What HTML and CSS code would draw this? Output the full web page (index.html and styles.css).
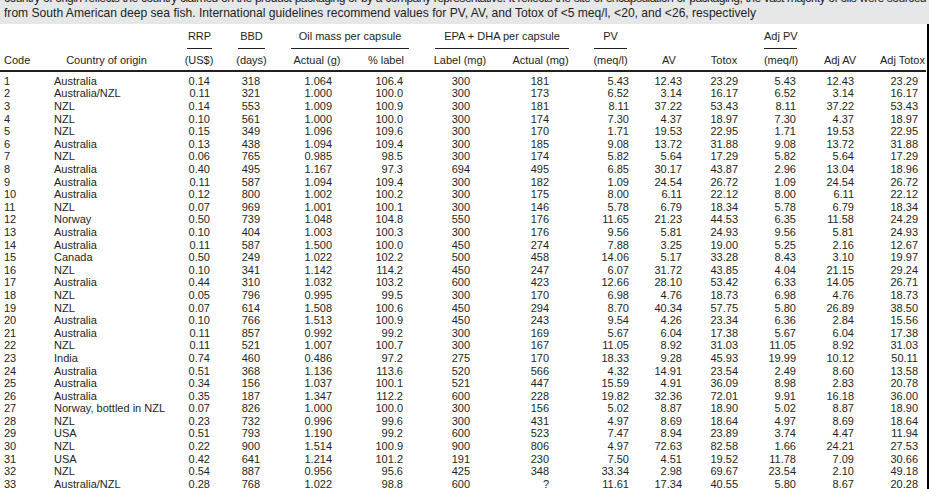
FILE: index.html
```html
<!DOCTYPE html>
<html lang="en">
<head>
<meta charset="utf-8">
<title>Fish oil supplements table</title>
<link rel="stylesheet" href="styles.css">
</head>
<body>
<div class="page">
  <div class="caption">
    <p class="cap-first">country of origin reflects the country claimed on the product packaging or by a company representative. It reflects the site of encapsulation or packaging; the vast majority of oils were sourced</p>
    <p>from South American deep sea fish. International guidelines recommend values for PV, AV, and Totox of &lt;5 meq/l, &lt;20, and &lt;26, respectively</p>
  </div>
  <div class="sheet">
    <div class="table">
      <div class="row head-top">
        <div class="span2"></div>
        <div class="rule rule-rrp">RRP</div>
        <div class="rule rule-bbd">BBD</div>
        <div class="span2 rule rule-oil">Oil mass per capsule</div>
        <div class="span2 rule rule-epa">EPA + DHA per capsule</div>
        <div class="rule rule-pv">PV</div>
        <div></div>
        <div></div>
        <div class="rule rule-adjpv">Adj PV</div>
        <div></div>
        <div></div>
      </div>
      <div class="row head-units">
        <div>Code</div>
        <div>Country of origin</div>
        <div>(US$)</div>
        <div>(days)</div>
        <div>Actual (g)</div>
        <div>% label</div>
        <div>Label (mg)</div>
        <div>Actual (mg)</div>
        <div>(meq/l)</div>
        <div>AV</div>
        <div>Totox</div>
        <div>(meq/l)</div>
        <div>Adj AV</div>
        <div>Adj Totox</div>
      </div>
      <div class="body">
        <div class="row"><span>1</span><span>Australia</span><span>0.14</span><span>318</span><span>1.064</span><span>106.4</span><span>300</span><span>181</span><span>5.43</span><span>12.43</span><span>23.29</span><span>5.43</span><span>12.43</span><span>23.29</span></div>
        <div class="row"><span>2</span><span>Australia/NZL</span><span>0.11</span><span>321</span><span>1.000</span><span>100.0</span><span>300</span><span>173</span><span>6.52</span><span>3.14</span><span>16.17</span><span>6.52</span><span>3.14</span><span>16.17</span></div>
        <div class="row"><span>3</span><span>NZL</span><span>0.14</span><span>553</span><span>1.009</span><span>100.9</span><span>300</span><span>181</span><span>8.11</span><span>37.22</span><span>53.43</span><span>8.11</span><span>37.22</span><span>53.43</span></div>
        <div class="row"><span>4</span><span>NZL</span><span>0.10</span><span>561</span><span>1.000</span><span>100.0</span><span>300</span><span>174</span><span>7.30</span><span>4.37</span><span>18.97</span><span>7.30</span><span>4.37</span><span>18.97</span></div>
        <div class="row"><span>5</span><span>NZL</span><span>0.15</span><span>349</span><span>1.096</span><span>109.6</span><span>300</span><span>170</span><span>1.71</span><span>19.53</span><span>22.95</span><span>1.71</span><span>19.53</span><span>22.95</span></div>
        <div class="row"><span>6</span><span>Australia</span><span>0.13</span><span>438</span><span>1.094</span><span>109.4</span><span>300</span><span>185</span><span>9.08</span><span>13.72</span><span>31.88</span><span>9.08</span><span>13.72</span><span>31.88</span></div>
        <div class="row"><span>7</span><span>NZL</span><span>0.06</span><span>765</span><span>0.985</span><span>98.5</span><span>300</span><span>174</span><span>5.82</span><span>5.64</span><span>17.29</span><span>5.82</span><span>5.64</span><span>17.29</span></div>
        <div class="row"><span>8</span><span>Australia</span><span>0.40</span><span>495</span><span>1.167</span><span>97.3</span><span>694</span><span>495</span><span>6.85</span><span>30.17</span><span>43.87</span><span>2.96</span><span>13.04</span><span>18.96</span></div>
        <div class="row"><span>9</span><span>Australia</span><span>0.11</span><span>587</span><span>1.094</span><span>109.4</span><span>300</span><span>182</span><span>1.09</span><span>24.54</span><span>26.72</span><span>1.09</span><span>24.54</span><span>26.72</span></div>
        <div class="row"><span>10</span><span>Australia</span><span>0.12</span><span>800</span><span>1.002</span><span>100.2</span><span>300</span><span>175</span><span>8.00</span><span>6.11</span><span>22.12</span><span>8.00</span><span>6.11</span><span>22.12</span></div>
        <div class="row"><span>11</span><span>NZL</span><span>0.07</span><span>969</span><span>1.001</span><span>100.1</span><span>300</span><span>146</span><span>5.78</span><span>6.79</span><span>18.34</span><span>5.78</span><span>6.79</span><span>18.34</span></div>
        <div class="row"><span>12</span><span>Norway</span><span>0.50</span><span>739</span><span>1.048</span><span>104.8</span><span>550</span><span>176</span><span>11.65</span><span>21.23</span><span>44.53</span><span>6.35</span><span>11.58</span><span>24.29</span></div>
        <div class="row"><span>13</span><span>Australia</span><span>0.10</span><span>404</span><span>1.003</span><span>100.3</span><span>300</span><span>176</span><span>9.56</span><span>5.81</span><span>24.93</span><span>9.56</span><span>5.81</span><span>24.93</span></div>
        <div class="row"><span>14</span><span>Australia</span><span>0.11</span><span>587</span><span>1.500</span><span>100.0</span><span>450</span><span>274</span><span>7.88</span><span>3.25</span><span>19.00</span><span>5.25</span><span>2.16</span><span>12.67</span></div>
        <div class="row"><span>15</span><span>Canada</span><span>0.50</span><span>249</span><span>1.022</span><span>102.2</span><span>500</span><span>458</span><span>14.06</span><span>5.17</span><span>33.28</span><span>8.43</span><span>3.10</span><span>19.97</span></div>
        <div class="row"><span>16</span><span>NZL</span><span>0.10</span><span>341</span><span>1.142</span><span>114.2</span><span>450</span><span>247</span><span>6.07</span><span>31.72</span><span>43.85</span><span>4.04</span><span>21.15</span><span>29.24</span></div>
        <div class="row"><span>17</span><span>Australia</span><span>0.44</span><span>310</span><span>1.032</span><span>103.2</span><span>600</span><span>423</span><span>12.66</span><span>28.10</span><span>53.42</span><span>6.33</span><span>14.05</span><span>26.71</span></div>
        <div class="row"><span>18</span><span>NZL</span><span>0.05</span><span>796</span><span>0.995</span><span>99.5</span><span>300</span><span>170</span><span>6.98</span><span>4.76</span><span>18.73</span><span>6.98</span><span>4.76</span><span>18.73</span></div>
        <div class="row"><span>19</span><span>NZL</span><span>0.07</span><span>614</span><span>1.508</span><span>100.6</span><span>450</span><span>294</span><span>8.70</span><span>40.34</span><span>57.75</span><span>5.80</span><span>26.89</span><span>38.50</span></div>
        <div class="row"><span>20</span><span>Australia</span><span>0.10</span><span>766</span><span>1.513</span><span>100.9</span><span>450</span><span>243</span><span>9.54</span><span>4.26</span><span>23.34</span><span>6.36</span><span>2.84</span><span>15.56</span></div>
        <div class="row"><span>21</span><span>Australia</span><span>0.11</span><span>857</span><span>0.992</span><span>99.2</span><span>300</span><span>169</span><span>5.67</span><span>6.04</span><span>17.38</span><span>5.67</span><span>6.04</span><span>17.38</span></div>
        <div class="row"><span>22</span><span>NZL</span><span>0.11</span><span>521</span><span>1.007</span><span>100.7</span><span>300</span><span>167</span><span>11.05</span><span>8.92</span><span>31.03</span><span>11.05</span><span>8.92</span><span>31.03</span></div>
        <div class="row"><span>23</span><span>India</span><span>0.74</span><span>460</span><span>0.486</span><span>97.2</span><span>275</span><span>170</span><span>18.33</span><span>9.28</span><span>45.93</span><span>19.99</span><span>10.12</span><span>50.11</span></div>
        <div class="row"><span>24</span><span>Australia</span><span>0.51</span><span>368</span><span>1.136</span><span>113.6</span><span>520</span><span>566</span><span>4.32</span><span>14.91</span><span>23.54</span><span>2.49</span><span>8.60</span><span>13.58</span></div>
        <div class="row"><span>25</span><span>Australia</span><span>0.34</span><span>156</span><span>1.037</span><span>100.1</span><span>521</span><span>447</span><span>15.59</span><span>4.91</span><span>36.09</span><span>8.98</span><span>2.83</span><span>20.78</span></div>
        <div class="row"><span>26</span><span>Australia</span><span>0.35</span><span>187</span><span>1.347</span><span>112.2</span><span>600</span><span>228</span><span>19.82</span><span>32.36</span><span>72.01</span><span>9.91</span><span>16.18</span><span>36.00</span></div>
        <div class="row"><span>27</span><span>Norway, bottled in NZL</span><span>0.07</span><span>826</span><span>1.000</span><span>100.0</span><span>300</span><span>156</span><span>5.02</span><span>8.87</span><span>18.90</span><span>5.02</span><span>8.87</span><span>18.90</span></div>
        <div class="row"><span>28</span><span>NZL</span><span>0.23</span><span>732</span><span>0.996</span><span>99.6</span><span>300</span><span>431</span><span>4.97</span><span>8.69</span><span>18.64</span><span>4.97</span><span>8.69</span><span>18.64</span></div>
        <div class="row"><span>29</span><span>USA</span><span>0.51</span><span>793</span><span>1.190</span><span>99.2</span><span>600</span><span>523</span><span>7.47</span><span>8.94</span><span>23.89</span><span>3.74</span><span>4.47</span><span>11.94</span></div>
        <div class="row"><span>30</span><span>NZL</span><span>0.22</span><span>900</span><span>1.514</span><span>100.9</span><span>900</span><span>806</span><span>4.97</span><span>72.63</span><span>82.58</span><span>1.66</span><span>24.21</span><span>27.53</span></div>
        <div class="row"><span>31</span><span>USA</span><span>0.42</span><span>641</span><span>1.214</span><span>101.2</span><span>191</span><span>230</span><span>7.50</span><span>4.51</span><span>19.52</span><span>11.78</span><span>7.09</span><span>30.66</span></div>
        <div class="row"><span>32</span><span>NZL</span><span>0.54</span><span>887</span><span>0.956</span><span>95.6</span><span>425</span><span>348</span><span>33.34</span><span>2.98</span><span>69.67</span><span>23.54</span><span>2.10</span><span>49.18</span></div>
        <div class="row"><span>33</span><span>Australia/NZL</span><span>0.28</span><span>768</span><span>1.022</span><span>98.8</span><span>600</span><span>?</span><span>11.61</span><span>17.34</span><span>40.55</span><span>5.80</span><span>8.67</span><span>20.28</span></div>
      </div>
    </div>
  </div>
</div>
</body>
</html>
```
FILE: styles.css
```css
* { box-sizing: border-box; }

html, body {
  margin: 0;
  padding: 0;
  background: #fff;
}

body {
  font-family: "Liberation Sans", Arial, sans-serif;
  color: #231f20;
  overflow: hidden;
}

.page {
  width: 929px;
}

/* caption band (scrolled so its first line is cut off) */
.caption {
  margin-top: -9px;
  height: 33px;
  padding: 0 3px 0 4px;
  background: #e6e7e9;
  font-size: 12.1px;
  line-height: 15px;
}

.caption p {
  margin: 0;
  white-space: nowrap;
}

.cap-first {
  letter-spacing: -0.55px;
  text-align: justify;
  text-align-last: justify;
}

.sheet {
  width: 929px;
  padding-right: 1px;
  border-right: 2px solid #000;
}

.table {
  width: 926px;
  font-size: 11px;
}

.row {
  display: grid;
  grid-template-columns: 54px 116px 58px 47px 84px 59px 84px 77px 63px 54px 56px 58px 60px 56px;
  white-space: nowrap;
}

.span2 { grid-column: span 2; }

/* header, first line with short rules */
.head-top {
  padding-top: 5.7px;
  line-height: 13px;
}

.rule {
  text-align: center;
  padding-bottom: 5.3px;
  border-bottom: 1px solid #231f20;
}

.rule-rrp { margin: 0 16px 0 17px; }
.rule-bbd { margin: 0 10px; }
.rule-oil { margin: 0 9px 0 16px; }
.rule-epa { margin: 0 10px 0 17px; }
.rule-pv { margin: 0 15px; }
.rule-adjpv { margin: 0 13px 0 12px; }

/* header, unit line */
.head-units {
  padding-top: 5.4px;
  padding-bottom: 2.6px;
  line-height: 13px;
  text-align: center;
  border-bottom: 2px solid #231f20;
}

.head-units > :nth-child(1) { text-align: left; padding-left: 4px; }
.head-units > :nth-child(2) { padding-right: 11px; }
.head-units > :nth-child(6) { text-align: right; padding-right: 14px; }
.head-units > :nth-child(14) { text-align: right; padding-right: 1px; }

/* body rows */
.body {
  padding-top: 2.9px;
}

.body .row {
  line-height: 12.6px;
  text-align: right;
}

.body .row > :nth-child(1) { text-align: left; padding-left: 4px; }
.body .row > :nth-child(2) { text-align: left; }
.body .row > :nth-child(3) { padding-right: 18px; }
.body .row > :nth-child(4) { padding-right: 15px; }
.body .row > :nth-child(5) { padding-right: 27px; }
.body .row > :nth-child(6) { padding-right: 15px; }
.body .row > :nth-child(7) { padding-right: 32px; }
.body .row > :nth-child(8) { padding-right: 30px; }
.body .row > :nth-child(9) { padding-right: 13px; }
.body .row > :nth-child(10) { padding-right: 14px; }
.body .row > :nth-child(11) { padding-right: 14px; }
.body .row > :nth-child(12) { padding-right: 14px; }
.body .row > :nth-child(13) { padding-right: 16px; }
.body .row > :nth-child(14) { padding-right: 8px; }
```
